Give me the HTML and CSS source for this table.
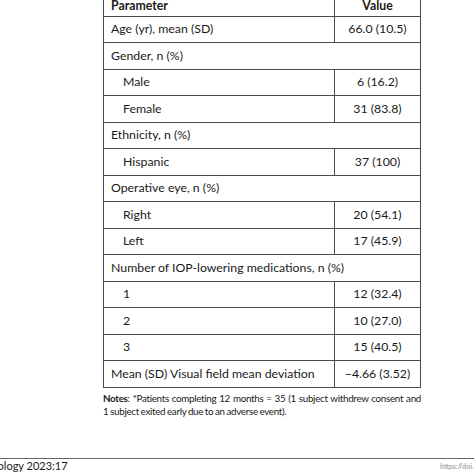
FILE: index.html
```html
<!DOCTYPE html>
<html>
<head>
<meta charset="utf-8">
<link rel="stylesheet" href="styles.css">
</head>
<body>
<div class="page">
  <div class="tablewrap">
    <table class="data">
      <thead>
        <tr><th class="param">Parameter</th><th class="val">Value</th></tr>
      </thead>
      <tbody>
        <tr><td>Age (yr), mean (SD)</td><td class="val">66.0 (10.5)</td></tr>
        <tr><td colspan="2">Gender, n (%)</td></tr>
        <tr><td class="sub">Male</td><td class="val">6 (16.2)</td></tr>
        <tr><td class="sub">Female</td><td class="val">31 (83.8)</td></tr>
        <tr><td colspan="2">Ethnicity, n (%)</td></tr>
        <tr><td class="sub">Hispanic</td><td class="val">37 (100)</td></tr>
        <tr><td colspan="2">Operative eye, n (%)</td></tr>
        <tr><td class="sub">Right</td><td class="val">20 (54.1)</td></tr>
        <tr><td class="sub">Left</td><td class="val">17 (45.9)</td></tr>
        <tr><td colspan="2">Number of IOP-lowering medications, n (%)</td></tr>
        <tr><td class="sub">1</td><td class="val">12 (32.4)</td></tr>
        <tr><td class="sub">2</td><td class="val">10 (27.0)</td></tr>
        <tr><td class="sub">3</td><td class="val">15 (40.5)</td></tr>
        <tr><td>Mean (SD) Visual field mean deviation</td><td class="val">−4.66 (3.52)</td></tr>
      </tbody>
    </table>
    <p class="notes"><b>Notes</b>: *Patients completing 12 months = 35 (1 subject withdrew consent and 1&nbsp;subject exited early due to an adverse event).</p>
  </div>
  <div class="footer">
    <span class="journal">Clinical Ophthalmology 2023:17</span>
    <span class="doi">https://doi.org/10.2147/OPTH</span>
  </div>
</div>
</body>
</html>
```

FILE: styles.css
```css
html, body {
  margin: 0;
  padding: 0;
  background: #fff;
  overflow: hidden;
}
body {
  width: 474px;
  height: 474px;
  font-family: Lato, "Noto Sans", sans-serif;
  color: #1a1a1a;
}
.page {
  width: 474px;
  height: 474px;
  display: flex;
  flex-direction: column;
}
.tablewrap {
  margin: -11px 0 0 103px;
  width: 318px;
}
.data {
  border-collapse: collapse;
  width: 318px;
  font-size: 12.3px;
}
.data th, .data td {
  border: 1.5px solid #4a4a4a;
  height: 25.5px;
  padding: 0 0 0 7px;
  text-align: left;
  vertical-align: middle;
  line-height: 14px;
}
.data th {
  font-weight: bold;
  height: 19.5px;
  padding-top: 6px;
}
.data th.val {
  padding-top: 6px;
}
.data td.sub {
  padding-left: 19px;
}
.data .val {
  width: 85px;
  padding: 0;
  text-align: center;
}
.notes {
  margin: 4px 0 0 0;
  font-size: 9.8px;
  letter-spacing: -0.3px;
  word-spacing: -0.5px;
  line-height: 13.5px;
  text-align: justify;
  color: #1a1a1a;
}
.footer {
  margin-top: auto;
  margin-bottom: 2px;
  border-top: 1.5px solid #666;
  height: 13px;
  display: flex;
  justify-content: space-between;
  align-items: center;
  white-space: nowrap;
  overflow: hidden;
}
.journal {
  font-size: 11px;
  margin-left: -88px;
  color: #1a1a1a;
}
.doi {
  font-size: 7px;
  font-weight: bold;
  color: #aaa;
  margin-right: -62px;
}
```
